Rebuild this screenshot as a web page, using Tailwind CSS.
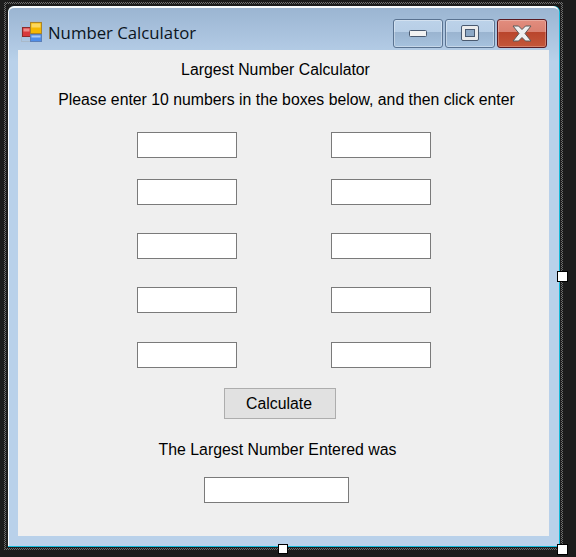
<!DOCTYPE html>
<html lang="en">
  <head>
    <meta charset="UTF-8" />
    <title>Number Calculator</title>
    <script src="https://cdn.jsdelivr.net/npm/@tailwindcss/browser@4"></script>
  </head>
  <body class="bg-[#1c1c1c] w-[576px] h-[557px] overflow-hidden relative font-['Liberation_Sans',sans-serif] text-black">
    <!-- designer selection frame -->
    <div class="mt-[2px] ml-[4px] w-[559px] h-[548px] p-[2px] bg-[repeating-conic-gradient(#6e6e6e_0_25%,#1c1c1c_0_50%)] bg-[length:2px_2px]">
      <div class="w-full h-full bg-[#1c1c1c] pl-[2px] pt-[2px]">
        <!-- form window -->
        <div class="w-[551px] h-[540px] rounded-t-[6px] border-t-2 border-l border-white/90 bg-[#b9d1ea] bg-gradient-to-b from-[#9bb5d2] via-[#b9d1ea] via-[10%] to-[#b9d1ea] shadow-[1px_0_0_#12b8d8,0_1px_0_#12b8d8] flex flex-col">
          <div class="h-[42px] flex items-center pl-[12px] pr-[12px] pt-[8px]">
            <svg width="22" height="22" viewBox="0 0 22 22" class="shrink-0 mt-[-3px]">
              <rect x="0.5" y="0.5" width="20" height="20" fill="none" stroke="#a9b9c9" stroke-width="1" />
              <rect x="1.5" y="6.5" width="8" height="9" fill="#d8383a" stroke="#8c2a2a" />
              <rect x="2.5" y="7.5" width="6" height="3" fill="#ee8a88" />
              <rect x="9.5" y="1.5" width="11" height="11" fill="#f5b800" stroke="#a9842a" />
              <rect x="9.5" y="13.5" width="11" height="7" fill="#4f8ee8" stroke="#5b7fb8" />
              <rect x="10.5" y="2.5" width="9" height="4" fill="#fbd860" />
              <rect x="10.5" y="14.5" width="9" height="2" fill="#a6c8f5" />
            </svg>
            <span class="ml-[5px] font-['Open_Sans',sans-serif] text-[16.75px] text-[#0b1420] leading-none">Number Calculator</span>
            <div class="ml-auto flex gap-[2px]">
              <div class="w-[50px] h-[29px] rounded-[3px] border border-[#5a7391] bg-[linear-gradient(#bcd2e9_0,#b7cee6_45%,#9ab4d0_46%,#a6c2de_100%)] shadow-[inset_0_0_0_1px_rgba(255,255,255,0.35)] flex items-center justify-center">
                <svg width="18" height="7" viewBox="0 0 18 7"><rect x="0.5" y="0.5" width="17" height="6" rx="1" fill="#f2f2f2" stroke="#4a5a70" /></svg>
              </div>
              <div class="w-[50px] h-[29px] rounded-[3px] border border-[#5a7391] bg-[linear-gradient(#bcd2e9_0,#b7cee6_45%,#9ab4d0_46%,#a6c2de_100%)] shadow-[inset_0_0_0_1px_rgba(255,255,255,0.35)] flex items-center justify-center">
                <svg width="18" height="16" viewBox="0 0 18 16"><rect x="0.5" y="0.5" width="17" height="15" rx="1.5" fill="#ececec" stroke="#4a5a70" /><rect x="4.5" y="4.5" width="9" height="7" fill="#8ea9c6" stroke="#4a5a70" /></svg>
              </div>
              <div class="w-[50px] h-[29px] rounded-[3px] border border-[#5a1a22] bg-[linear-gradient(#e28d7e_0,#d98070_45%,#b9452c_46%,#c4573a_100%)] shadow-[inset_0_0_0_1px_rgba(255,255,255,0.25)] flex items-center justify-center">
                <svg width="20" height="17" viewBox="0 0 20 17"><path d="M1 1 H6.5 L10 4.5 L13.5 1 H19 L13 8.5 L19 16 H13.5 L10 12.5 L6.5 16 H1 L7 8.5 Z" fill="#efefef" stroke="#5a5a5a" stroke-width="1" stroke-linejoin="round" /></svg>
              </div>
            </div>
          </div>
          <!-- client area -->
          <div class="ml-[9px] w-[531px] h-[486px] bg-[#efefef] flex flex-col items-center text-[15.8px] leading-[18px]">
            <p class="mt-[11px] ml-[-16px]">Largest Number Calculator</p>
            <p class="mt-[12px] ml-[6px]">Please enter 10 numbers in the boxes below, and then click enter</p>
            <div class="mt-[23px] flex gap-[94px]">
              <div class="flex flex-col">
                <input class="w-[100px] h-[26px] bg-white border border-[#7a7a7a]" />
                <input class="mt-[21px] w-[100px] h-[26px] bg-white border border-[#7a7a7a]" />
                <input class="mt-[28px] w-[100px] h-[26px] bg-white border border-[#7a7a7a]" />
                <input class="mt-[28px] w-[100px] h-[26px] bg-white border border-[#7a7a7a]" />
                <input class="mt-[29px] w-[100px] h-[26px] bg-white border border-[#7a7a7a]" />
              </div>
              <div class="flex flex-col">
                <input class="w-[100px] h-[26px] bg-white border border-[#7a7a7a]" />
                <input class="mt-[21px] w-[100px] h-[26px] bg-white border border-[#7a7a7a]" />
                <input class="mt-[28px] w-[100px] h-[26px] bg-white border border-[#7a7a7a]" />
                <input class="mt-[28px] w-[100px] h-[26px] bg-white border border-[#7a7a7a]" />
                <input class="mt-[29px] w-[100px] h-[26px] bg-white border border-[#7a7a7a]" />
              </div>
            </div>
            <button class="mt-[20px] ml-[-7px] pr-[2px] w-[112px] h-[31px] bg-[#e1e1e1] border border-[#adadad]">Calculate</button>
            <p class="mt-[22px] ml-[-12px] text-[15.85px]">The Largest Number Entered was</p>
            <input class="mt-[18px] ml-[-14px] w-[145px] h-[26px] bg-white border border-[#7a7a7a]" />
          </div>
        </div>
      </div>
    </div>
    <!-- resize handles -->
    <div class="absolute left-[557px] top-[271px] w-[11px] h-[11px] bg-white border border-black"></div>
    <div class="absolute left-[557px] top-[544px] w-[11px] h-[11px] bg-white border border-black"></div>
    <div class="absolute left-[278px] top-[544px] w-[10px] h-[10px] bg-white border border-black"></div>
  </body>
</html>
